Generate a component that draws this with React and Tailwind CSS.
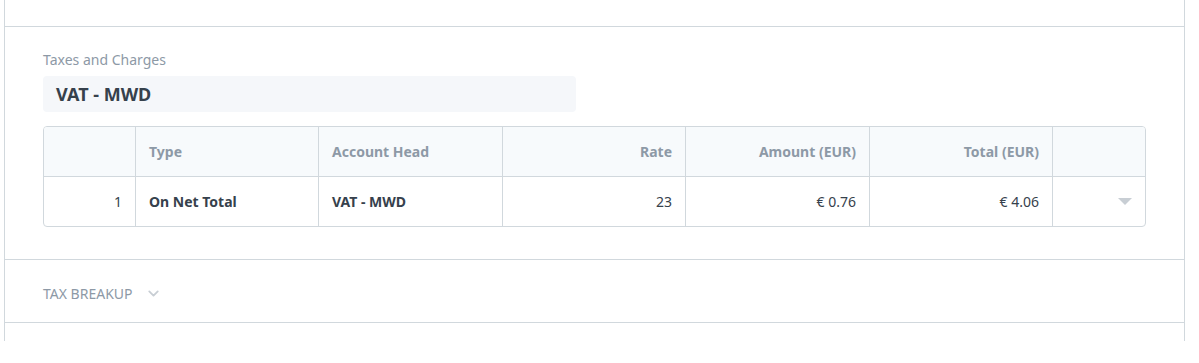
import { ChevronDown } from 'lucide-react'

const cols = [
  { label: '', w: 'w-[92px]', align: 'text-right' },
  { label: 'Type', w: 'w-[183px]', align: 'text-left' },
  { label: 'Account Head', w: 'w-[184px]', align: 'text-left' },
  { label: 'Rate', w: 'w-[183px]', align: 'text-right' },
  { label: 'Amount (EUR)', w: 'w-[184px]', align: 'text-right' },
  { label: 'Total (EUR)', w: 'w-[183px]', align: 'text-right' },
]

const row = ['1', 'On Net Total', 'VAT - MWD', '23', '€ 0.76', '€ 4.06']

export default function App() {
  return (
    <div className="h-[363px] w-[1199px] bg-white font-['Noto_Sans',sans-serif] text-[#36414c]">
      <div className="ml-[4px] flex h-[341px] w-[1181px] flex-col border-x border-[#d1d8dd]">
        {/* previous section tail */}
        <div className="h-[27px] shrink-0 border-b border-[#d1d8dd]" />

        {/* Taxes and Charges */}
        <div className="shrink-0 border-b border-[#d1d8dd] px-[38px] pt-[23px] pb-[32px]">
          <p className="mb-[6px] h-[20px] text-[14px] leading-[20px] text-[#8d99a6]">Taxes and Charges</p>
          <div className="flex h-[36px] w-[533px] items-center rounded-[4px] bg-[#f5f7fa] px-[13px] text-[18px] font-bold">
            VAT - MWD
          </div>

          <div className="mt-[14px] w-[1103px] overflow-hidden rounded-[4px] border border-[#d1d8dd] text-[14px]">
            <div className="flex h-[50px] border-b border-[#d1d8dd] bg-[#f7fafc] font-bold text-[#8d99a6]">
              {cols.map((c, i) => (
                <div key={i} className={`${c.w} ${c.align} flex shrink-0 items-center border-r border-[#d1d8dd] px-[13px] ${c.align === 'text-right' ? 'justify-end' : ''}`}>
                  {c.label}
                </div>
              ))}
              <div className="flex-1" />
            </div>
            <div className="flex h-[49px]">
              {cols.map((c, i) => (
                <div
                  key={i}
                  className={`${c.w} flex shrink-0 items-center border-r border-[#d1d8dd] px-[13px] ${c.align === 'text-right' ? 'justify-end' : ''} ${i === 1 || i === 2 ? 'font-bold' : ''}`}
                >
                  {row[i]}
                </div>
              ))}
              <div className="flex flex-1 items-center justify-end pr-[13px]">
                <svg width="14" height="8" viewBox="0 0 14 8">
                  <path d="M0 0 L14 0 L7 7 Z" fill="#c8ced4" />
                </svg>
              </div>
            </div>
          </div>
        </div>

        {/* Tax breakup */}
        <div className="flex h-[63px] shrink-0 items-center gap-[12px] border-b border-[#d1d8dd] px-[38px] pt-[4px]">
          <span className="text-[14px] uppercase text-[#8d99a6]">Tax Breakup</span>
          <ChevronDown size={17} strokeWidth={2.5} className="text-[#c8ced4]" />
        </div>
      </div>
    </div>
  )
}
